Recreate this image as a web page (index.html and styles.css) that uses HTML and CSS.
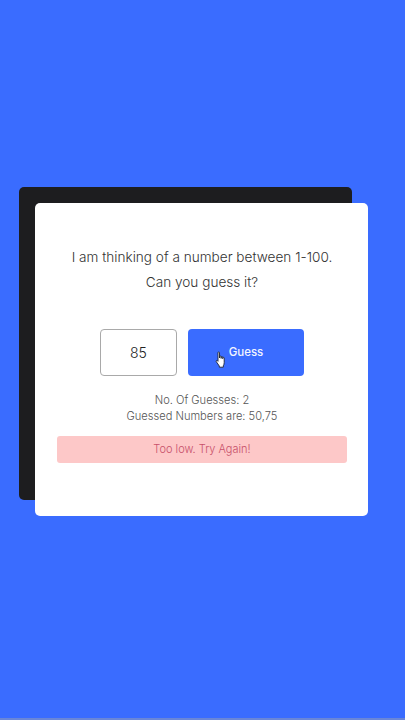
FILE: index.html
```html
<!DOCTYPE html>
<html lang="en">
<head>
  <meta charset="UTF-8">
  <meta name="viewport" content="width=device-width, initial-scale=1.0">
  <title>Number Guessing Game</title>
  <link rel="stylesheet" href="styles.css">
</head>
<body>

  <main class="stage">
    <div class="game-card">
      <p class="intro">I am thinking of a number between 1-100.<br>Can you guess it?</p>

      <div class="guess-row">
        <input class="guess-input" type="text" value="85">
        <button class="guess-btn">Guess
          <!-- Mouse pointer over the button -->
          <svg class="pointer" width="12" height="18" viewBox="0 0 12 18">
            <path d="M3 1.6c0-.8 1.5-.8 1.5 0V7l.2-1.4c.1-.8 1.4-.7 1.4.1V7.400l.2-1.300c.1-.8 1.400-.7 1.400.1v1.500l.2-.9c.2-.7 1.300-.6 1.300.2v4.600c0 1.400-.4 2.200-.9 3.200v1.400H4.300v-1.200L1.300 10.700c-.6-.9.5-1.800 1.200-1L3 10.300z" fill="#fff" stroke="#1c2233" stroke-width=".9" stroke-linejoin="round"/>
          </svg>
        </button>
      </div>

      <div class="stats">
        <p>No. Of Guesses: 2</p>
        <p>Guessed Numbers are: 50,75</p>
      </div>

      <div class="alert">Too low. Try Again!</div>
    </div>
  </main>

  <div class="bottom-strip"></div>

</body>
</html>
```

FILE: styles.css
```css
* {
  box-sizing: border-box;
}

body {
  font-family: "Inter", "Liberation Sans", sans-serif;
  display: flex;
  flex-direction: column;
  height: 100vh;
  margin: 0;
  background-color: #3a6cff;
  overflow: hidden;
}

.stage {
  flex: 1;
  display: flex;
  justify-content: center;
  align-items: center;
}

.bottom-strip {
  height: 2px;
  background-color: #6a86d8;
}

.game-card {
  width: 333px;
  height: 313px;
  margin-right: 2px;
  padding: 42px 21px 0 22px;
  background-color: #fff;
  border-radius: 5px;
  box-shadow: -16px -16px 0 #1d1d1f;
}

.intro {
  margin: 0;
  font-size: 13.600px;
  font-weight: 300;
  line-height: 25px;
  text-align: center;
  color: #333;
}

.guess-row {
  display: flex;
  justify-content: center;
  gap: 11px;
  margin-top: 34px;
}

.guess-input {
  width: 77px;
  height: 47px;
  border: 1px solid #a9a9a9;
  border-radius: 4px;
  font-family: inherit;
  font-size: 14px;
  font-weight: 300;
  text-align: center;
  color: #222;
  background-color: #fff;
}

.guess-btn {
  position: relative;
  width: 116px;
  height: 47px;
  border: none;
  border-radius: 4px;
  font-family: inherit;
  font-size: 11.500px;
  font-weight: 500;
  color: #f2f5ff;
  background-color: #3a6cff;
  cursor: pointer;
}

.pointer {
  position: absolute;
  left: 27px;
  top: 22px;
}

.stats {
  margin-top: 16px;
  text-align: center;
  font-size: 11.100px;
  font-weight: 300;
  line-height: 16px;
  color: #555;
}

.stats p {
  margin: 0;
}

.alert {
  height: 27px;
  margin-top: 12px;
  line-height: 27px;
  text-align: center;
  font-size: 11px;
  font-weight: 300;
  color: #c8506a;
  background-color: #fdc8c8;
  border-radius: 3px;
}
```
